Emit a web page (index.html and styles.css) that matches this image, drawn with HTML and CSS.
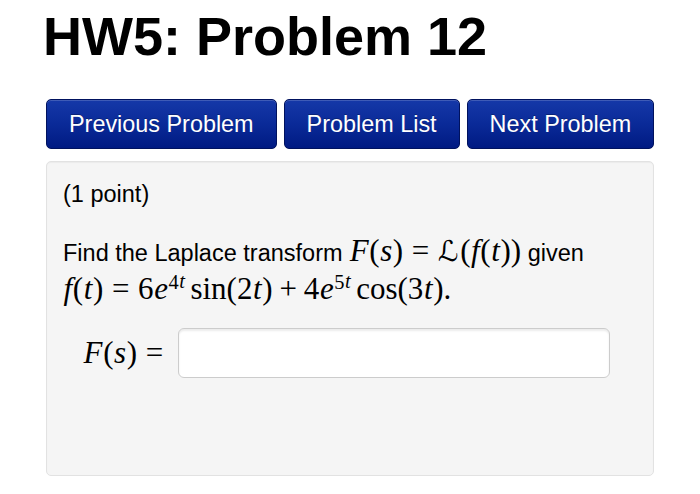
FILE: index.html
```html
<!DOCTYPE html>
<html>
<head>
<meta charset="utf-8">
<title>HW5: Problem 12</title>
<link rel="stylesheet" href="styles.css">
</head>
<body>
<div class="page">
  <h1 class="title">HW5: Problem 12</h1>
  <nav class="nav">
    <a class="btn" href="#">Previous Problem</a>
    <a class="btn" href="#">Problem List</a>
    <a class="btn" href="#">Next Problem</a>
  </nav>
  <div class="panel">
    <p class="points">(1 point)</p>
    <p class="question">Find the Laplace transform <span class="m"><i>F</i>(<i>s</i>)<span class="rel">=</span><span class="cal">ℒ</span>(<i>f</i>(<i>t</i>))</span> given<br><span class="m"><i>f</i>(<i>t</i>)<span class="rel">=</span>6<i>e</i><span class="sup">4<i>t</i></span><span class="fn">sin</span>(2<i>t</i>)<span class="bin">+</span>4<i>e</i><span class="sup">5<i>t</i></span><span class="fn">cos</span>(3<i>t</i>).</span></p>
    <div class="answer">
      <span class="m label"><i>F</i>(<i>s</i>)<span class="rel">=</span></span>
      <input class="field" type="text">
    </div>
  </div>
</div>
</body>
</html>
```
FILE: styles.css
```css
html, body {
  margin: 0;
  padding: 0;
  background: #ffffff;
}
body {
  font-family: "Liberation Sans", Arial, sans-serif;
  color: #000;
}
.page {
  padding: 0 46px;
}
.title {
  margin: 6px 0 0 -3px;
  font-size: 54px;
  line-height: 60px;
  font-weight: bold;
}
.nav {
  display: flex;
  gap: 7px;
  margin-top: 33px;
}
.btn {
  display: flex;
  align-items: center;
  flex-shrink: 0;
  white-space: nowrap;
  height: 50px;
  box-sizing: border-box;
  padding: 0 22px;
  font-size: 23.4px;
  color: #ffffff;
  text-decoration: none;
  background: linear-gradient(to bottom, #1538a8 0%, #0a2a98 50%, #001a82 100%);
  border: 1px solid #00125e;
  border-radius: 5px;
  box-shadow: inset 0 1px 0 rgba(255,255,255,0.18);
  text-shadow: 0 -1px 0 rgba(0,0,0,0.25);
}
.panel {
  margin-top: 12px;
  box-sizing: border-box;
  min-height: 315px;
  padding: 16px 16px;
  background: #f5f5f5;
  border: 1px solid #e2e2e2;
  border-radius: 5px;
  box-shadow: inset 0 1px 1px rgba(0,0,0,0.04);
}
.points {
  margin: 0;
  font-size: 23.5px;
  line-height: 33.6px;
}
.question {
  margin: 21px 0 0;
  font-size: 23.5px;
  line-height: 36px;
}
.m {
  font-family: "Liberation Serif", "Times New Roman", serif;
  font-size: 31px;
  white-space: nowrap;
}
.m i {
  font-style: italic;
  padding: 0 0.02em;
}
.rel {
  margin: 0 0.278em;
}
.bin {
  margin: 0 0.222em;
}
.fn {
  margin-left: 0.167em;
}
.sup {
  font-size: 66%;
  vertical-align: 0.5em;
  line-height: 0;
}
.cal {
  font-family: "DejaVu Serif", "DejaVu Sans", serif;
  font-style: italic;
  font-size: 92%;
  padding-right: 0.06em;
}
.answer {
  display: flex;
  align-items: center;
  margin-top: 19px;
  padding-left: 20px;
}
.label {
  margin-right: 6px;
}
.field {
  width: 432px;
  height: 50px;
  box-sizing: border-box;
  background: #ffffff;
  border: 1px solid #cccccc;
  border-radius: 6px;
  box-shadow: inset 0 2px 2px rgba(0,0,0,0.08);
  margin: 0;
  padding: 4px 8px;
  font-size: 20px;
}
```
